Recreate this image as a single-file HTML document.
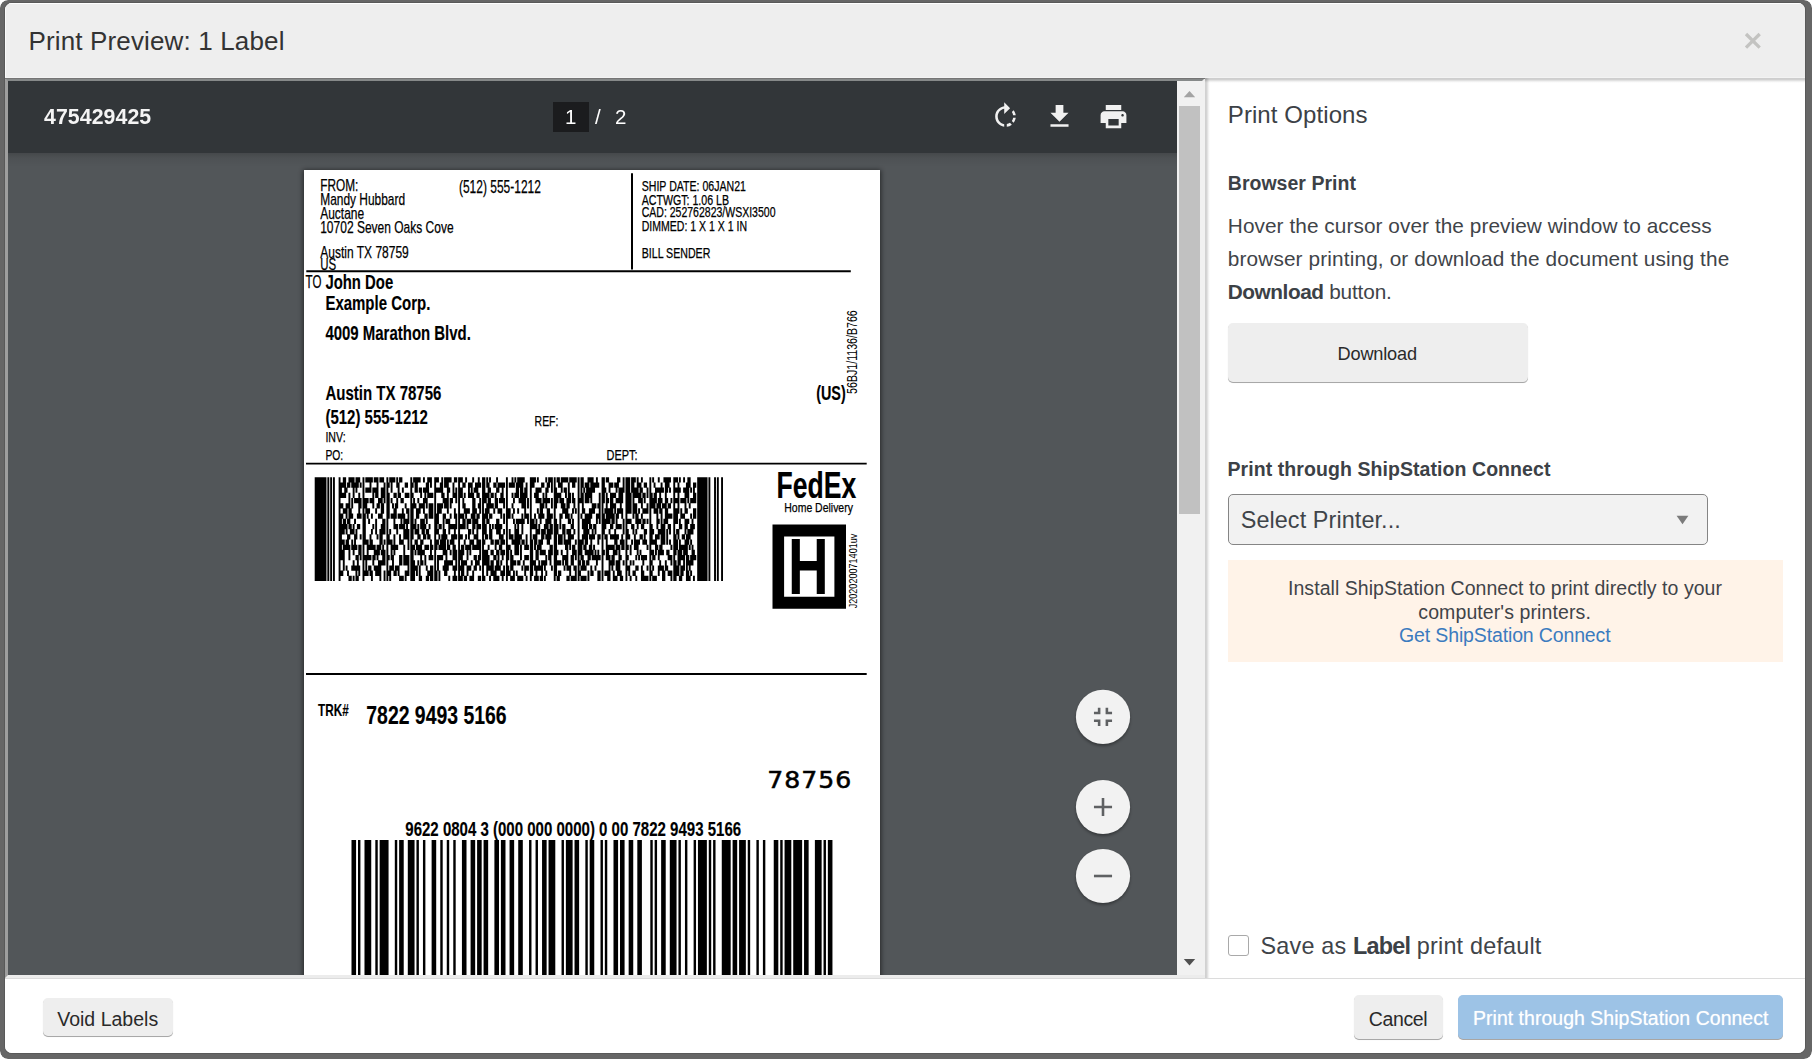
<!DOCTYPE html>
<html lang="en">
<head>
<meta charset="utf-8">
<title>Print Preview: 1 Label</title>
<style>
html,body{margin:0;padding:0;}
body{width:1812px;height:1059px;overflow:hidden;background:#fff;font-family:"Liberation Sans",sans-serif;position:relative;}
.abs{position:absolute;box-sizing:border-box;}
.backdrop{left:0;top:0;width:1812px;height:1059px;background:#666666;border-radius:8px;}
.modal{left:5px;top:3px;width:1800px;height:1050px;background:#fff;border-radius:7px;overflow:hidden;box-shadow:0 0 0 1px rgba(0,0,0,.12);}
.modal-header{left:0;top:0;width:1800px;height:75px;background:#eeeeee;border-top:1px solid #fff;border-left:1px solid #fafafa;border-bottom:1px solid #f3f3f3;}
.viewer{left:0;top:75px;width:1200px;height:900px;background:#525659;border-style:solid;border-width:3px;border-color:#868989 #ececec #ececec #9e9e9e;}
.viewer-topline{left:0;top:75px;width:1200px;height:1px;background:#757575;}
.toolbar{left:3px;top:78px;width:1169px;height:72px;background:#323639;}
.pdfarea{left:3px;top:150px;width:1169px;height:822px;background:#525659;overflow:hidden;}
.pdfarea svg{position:absolute;left:0;top:0;}
.pdfshadow{left:0;top:0;width:1169px;height:14px;background:linear-gradient(rgba(0,0,0,.16),rgba(0,0,0,.06) 35%,rgba(0,0,0,0));}
.pageinput{left:548px;top:99px;width:36px;height:30px;background:#1b1c1e;}
.scroll{left:1172px;top:78px;width:28px;height:894px;background:#f1f1f1;}
.thumb{left:2px;top:25px;width:21px;height:408px;background:#c1c1c1;}
.options{left:1200px;top:75px;width:600px;height:900px;background:#fff;}
.sh-top{left:0;top:0;width:600px;height:5px;background:linear-gradient(rgba(0,0,0,.2) 0,rgba(0,0,0,.18) 30%,rgba(0,0,0,.1) 55%,rgba(0,0,0,.03) 78%,rgba(0,0,0,0) 100%);}
.sh-left{left:0;top:0;width:5px;height:900px;background:linear-gradient(to right,rgba(0,0,0,.19) 0,rgba(0,0,0,.17) 30%,rgba(0,0,0,.1) 55%,rgba(0,0,0,.03) 78%,rgba(0,0,0,0) 100%);}
.btn{background:#eeeeee;border-radius:5px;box-shadow:0 1px 0 #a8a8a8, 0 1px 1px rgba(0,0,0,.12);}
.select{background:#f2f2f2;border:1px solid #858585;border-radius:5px;}
.notice{background:#fff3e8;}
.checkbox{background:#fff;border:1px solid #a9a9a9;border-radius:3px;}
.modal-footer{left:0;top:975px;width:1800px;height:75px;background:#fff;border-top:1px solid #dcdcdc;}
.btn-primary{background:#9dc3e6;border-radius:5px;box-shadow:0 1px 0 #a9a6a3;}
.t{position:absolute;white-space:pre;font-family:"Liberation Sans",sans-serif;}
.t b{font-weight:700;color:#3c4146;}
.texts{left:0;top:0;width:1812px;height:1059px;pointer-events:none;}
.corner{width:12px;height:12px;background:#fff;}
</style>
</head>
<body>
<div class="abs backdrop"></div>

<div class="abs modal" role="dialog" aria-label="Print Preview">
  <div class="abs modal-header">
    <svg class="abs" style="left:1735.3px;top:25.300px" width="24" height="24" viewBox="0 0 24 24"><path d="M5 5 18.700 18.700M18.700 5 5 18.700" stroke="#c3c3c1" stroke-width="3.3" fill="none"/></svg>
  </div>

  <div class="abs viewer"></div>
  <div class="abs viewer-topline"></div>
  <div class="abs toolbar">
  </div>
  <div class="abs pageinput"></div>
  <!-- toolbar icons -->
  <svg class="abs" style="left:985.2px;top:98.1px" width="31" height="31" viewBox="0 0 24 24"><path fill="#f1f1f1" d="M15.55 5.55L11 1v3.07C7.06 4.56 4 7.92 4 12s3.05 7.44 7 7.93v-2.02c-2.84-.48-5-2.94-5-5.91s2.16-5.43 5-5.910V10l4.55-4.45zM19.93 11c-.17-1.39-.72-2.73-1.62-3.89l-1.42 1.42c.54.75.88 1.6 1.020 2.47h2.02zM13 17.9v2.02c1.39-.17 2.74-.71 3.9-1.61l-1.44-1.44c-.75.54-1.59.89-2.46 1.030zm3.89-2.42l1.42 1.41c.9-1.16 1.45-2.5 1.62-3.89h-2.02c-.14.87-.48 1.72-1.020 2.480z"/></svg>
  <svg class="abs" style="left:1039.4px;top:98.1px" width="31" height="31" viewBox="0 0 24 24"><path fill="#f1f1f1" d="M19 9h-4V3H9v6H5l7 7 7-7zM5 18v2h14v-2H5z"/></svg>
  <svg class="abs" style="left:1093.2px;top:98.1px" width="31" height="31" viewBox="0 0 24 24"><path fill="#f1f1f1" d="M19 8H5c-1.660 0-3 1.340-3 3v6h4v4h12v-4h4v-6c0-1.660-1.340-3-3-3zm-3 11H8v-5h8v5zm3-7c-.55 0-1-.45-1-1s.45-1 1-1 1 .45 1 1-.45 1-1 1zm-1-9H6v4h12V3z"/></svg>

  <div class="abs pdfarea">
    <svg width="1169" height="822" viewBox="8 153 1169 822">
      <defs>
        <filter id="blur" x="-10%" y="-10%" width="120%" height="120%"><feGaussianBlur stdDeviation="2.6"/></filter>
        <filter id="fabsh" x="-30%" y="-30%" width="160%" height="160%"><feGaussianBlur stdDeviation="1.6"/></filter>
      </defs>
      <rect x="303" y="170" width="578" height="830" fill="#000" opacity=".55" filter="url(#blur)"/>
      <rect x="304" y="170" width="576" height="830" fill="#fff"/>
      <g fill="#000">
<text x="320.2" y="190.7" font-size="16.6" font-weight="400" font-family="Liberation Sans, sans-serif" textLength="38.1" lengthAdjust="spacingAndGlyphs" stroke="#000" stroke-width=".25">FROM:</text>
<text x="320.2" y="204.7" font-size="16.6" font-weight="400" font-family="Liberation Sans, sans-serif" textLength="84.9" lengthAdjust="spacingAndGlyphs" stroke="#000" stroke-width=".25">Mandy Hubbard</text>
<text x="320.2" y="218.6" font-size="16.6" font-weight="400" font-family="Liberation Sans, sans-serif" textLength="44.0" lengthAdjust="spacingAndGlyphs" stroke="#000" stroke-width=".25">Auctane</text>
<text x="320.2" y="232.7" font-size="16.6" font-weight="400" font-family="Liberation Sans, sans-serif" textLength="133.4" lengthAdjust="spacingAndGlyphs" stroke="#000" stroke-width=".25">10702 Seven Oaks Cove</text>
<text x="320.2" y="257.7" font-size="16.6" font-weight="400" font-family="Liberation Sans, sans-serif" textLength="88.6" lengthAdjust="spacingAndGlyphs" stroke="#000" stroke-width=".25">Austin TX 78759</text>
<text x="320.2" y="269.7" font-size="16.6" font-weight="400" font-family="Liberation Sans, sans-serif" textLength="15.9" lengthAdjust="spacingAndGlyphs" stroke="#000" stroke-width=".25">US</text>
<text x="458.9" y="193.3" font-size="17.98" font-weight="400" font-family="Liberation Sans, sans-serif" textLength="82.0" lengthAdjust="spacingAndGlyphs" stroke="#000" stroke-width=".25">(512) 555-1212</text>
<text x="641.7" y="190.7" font-size="13.74" font-weight="400" font-family="Liberation Sans, sans-serif" textLength="104.3" lengthAdjust="spacingAndGlyphs" stroke="#000" stroke-width=".25">SHIP DATE: 06JAN21</text>
<text x="641.7" y="204.7" font-size="13.74" font-weight="400" font-family="Liberation Sans, sans-serif" textLength="87.4" lengthAdjust="spacingAndGlyphs" stroke="#000" stroke-width=".25">ACTWGT: 1.06 LB</text>
<text x="641.7" y="216.8" font-size="13.74" font-weight="400" font-family="Liberation Sans, sans-serif" textLength="133.8" lengthAdjust="spacingAndGlyphs" stroke="#000" stroke-width=".25">CAD: 252762823/WSXI3500</text>
<text x="641.7" y="230.9" font-size="13.74" font-weight="400" font-family="Liberation Sans, sans-serif" textLength="105.3" lengthAdjust="spacingAndGlyphs" stroke="#000" stroke-width=".25">DIMMED: 1 X 1 X 1 IN</text>
<text x="641.7" y="257.7" font-size="13.74" font-weight="400" font-family="Liberation Sans, sans-serif" textLength="68.7" lengthAdjust="spacingAndGlyphs" stroke="#000" stroke-width=".25">BILL SENDER</text>
<line x1="632" y1="173.3" x2="632" y2="269.5" stroke="#000" stroke-width="2"/>
<line x1="306.3" y1="271.25" x2="850.8" y2="271.25" stroke="#000" stroke-width="2.0"/>
<text x="305.6" y="287.8" font-size="18.32" font-weight="400" font-family="Liberation Sans, sans-serif" textLength="15.8" lengthAdjust="spacingAndGlyphs" stroke="#000" stroke-width=".25">TO</text>
<text x="325.4" y="289.4" font-size="20.15" font-weight="700" font-family="Liberation Sans, sans-serif" textLength="67.8" lengthAdjust="spacingAndGlyphs" stroke="#000" stroke-width=".15">John Doe</text>
<text x="325.4" y="309.6" font-size="20.15" font-weight="700" font-family="Liberation Sans, sans-serif" textLength="104.9" lengthAdjust="spacingAndGlyphs" stroke="#000" stroke-width=".15">Example Corp.</text>
<text x="325.4" y="339.8" font-size="20.15" font-weight="700" font-family="Liberation Sans, sans-serif" textLength="145.5" lengthAdjust="spacingAndGlyphs" stroke="#000" stroke-width=".15">4009 Marathon Blvd.</text>
<text x="325.4" y="399.8" font-size="20.15" font-weight="700" font-family="Liberation Sans, sans-serif" textLength="116.0" lengthAdjust="spacingAndGlyphs" stroke="#000" stroke-width=".15">Austin TX 78756</text>
<text x="325.4" y="423.6" font-size="20.15" font-weight="700" font-family="Liberation Sans, sans-serif" textLength="102.5" lengthAdjust="spacingAndGlyphs" stroke="#000" stroke-width=".15">(512) 555-1212</text>
<text x="816.2" y="399.5" font-size="20.15" font-weight="700" font-family="Liberation Sans, sans-serif" textLength="29.5" lengthAdjust="spacingAndGlyphs" stroke="#000" stroke-width=".15">(US)</text>
<text x="325.4" y="441.5" font-size="14.2" font-weight="400" font-family="Liberation Sans, sans-serif" textLength="20.2" lengthAdjust="spacingAndGlyphs" stroke="#000" stroke-width=".25">INV:</text>
<text x="325.4" y="459.8" font-size="14.2" font-weight="400" font-family="Liberation Sans, sans-serif" textLength="17.8" lengthAdjust="spacingAndGlyphs" stroke="#000" stroke-width=".25">PO:</text>
<text x="534.6" y="425.6" font-size="14.2" font-weight="400" font-family="Liberation Sans, sans-serif" textLength="23.8" lengthAdjust="spacingAndGlyphs" stroke="#000" stroke-width=".25">REF:</text>
<text x="606.5" y="459.8" font-size="14.2" font-weight="400" font-family="Liberation Sans, sans-serif" textLength="31.0" lengthAdjust="spacingAndGlyphs" stroke="#000" stroke-width=".25">DEPT:</text>
<text transform="translate(856.8,393.9) rotate(-90)" x="0" y="0" font-size="15.11" font-weight="400" font-family="Liberation Sans, sans-serif" textLength="83.6" lengthAdjust="spacingAndGlyphs">56BJ1/1136/B766</text>
<line x1="306" y1="463.6" x2="866.7" y2="463.6" stroke="#000" stroke-width="1.8"/>
<line x1="306" y1="674" x2="866.7" y2="674" stroke="#000" stroke-width="1.8"/>
<text x="776.6" y="497.8" font-size="37.5" font-weight="700" font-family="Liberation Sans, sans-serif" textLength="79.7" lengthAdjust="spacingAndGlyphs" stroke="#000" stroke-width=".15">FedEx</text>
<text x="784.3" y="511.9" font-size="13.63" font-weight="400" font-family="Liberation Sans, sans-serif" textLength="68.6" lengthAdjust="spacingAndGlyphs" stroke="#000" stroke-width=".25">Home Delivery</text>
<path fill-rule="evenodd" d="M772.5 524.5H846V608.8H772.500zM784.1 536.5V596.7H834.4V536.500z"/>
<text transform="translate(792.2,593.8) scale(0.712,1)" x="-5.8" y="0" font-size="79" font-weight="700" font-family="Liberation Sans, sans-serif">H</text>
<text transform="translate(856.5,608.3) rotate(-90)" x="0" y="0" font-size="11.34" font-weight="400" font-family="Liberation Sans, sans-serif" textLength="74.6" lengthAdjust="spacingAndGlyphs">J202020071401uv</text>
<text x="318.1" y="715.7" font-size="16.03" font-weight="700" font-family="Liberation Sans, sans-serif" textLength="30.6" lengthAdjust="spacingAndGlyphs" stroke="#000" stroke-width=".15">TRK#</text>
<text x="366.3" y="724.0" font-size="25.53" font-weight="700" font-family="Liberation Sans, sans-serif" textLength="140.3" lengthAdjust="spacingAndGlyphs" stroke="#000" stroke-width=".15">7822 9493 5166</text>
<text transform="translate(767.3,788.0) scale(1.075,1)" x="0" y="0" font-size="23.4" font-family="DejaVu Sans, sans-serif" letter-spacing="0.93" stroke="#000" stroke-width="0.55">78756</text>
<text x="405.3" y="835.5" font-size="19.46" font-weight="700" font-family="Liberation Sans, sans-serif" textLength="335.8" lengthAdjust="spacingAndGlyphs" stroke="#000" stroke-width=".15">9622 0804 3 (000 000 0000) 0 00 7822 9493 5166</text>
<path d="M351.50 840.1h4.58V980h-4.58zM358.00 840.1h2.42V980h-2.42zM364.49 840.1h6.75V980h-6.75zM375.32 840.1h2.42V980h-2.42zM379.65 840.1h8.91V980h-8.91zM394.81 840.1h2.42V980h-2.42zM399.14 840.1h4.58V980h-4.58zM407.80 840.1h6.75V980h-6.75zM416.46 840.1h2.42V980h-2.42zM422.96 840.1h2.42V980h-2.42zM431.62 840.1h4.58V980h-4.58zM440.28 840.1h2.42V980h-2.42zM446.77 840.1h2.42V980h-2.42zM453.27 840.1h2.42V980h-2.42zM461.93 840.1h4.58V980h-4.58zM470.59 840.1h4.58V980h-4.58zM477.09 840.1h4.58V980h-4.58zM483.58 840.1h4.58V980h-4.58zM494.41 840.1h4.58V980h-4.58zM500.91 840.1h4.58V980h-4.58zM509.57 840.1h4.58V980h-4.58zM518.23 840.1h4.58V980h-4.58zM529.06 840.1h2.42V980h-2.42zM535.55 840.1h2.42V980h-2.42zM542.05 840.1h4.58V980h-4.58zM548.54 840.1h6.75V980h-6.75zM561.54 840.1h2.42V980h-2.42zM565.87 840.1h6.75V980h-6.75zM574.53 840.1h4.58V980h-4.58zM585.35 840.1h2.42V980h-2.42zM589.68 840.1h4.58V980h-4.58zM600.51 840.1h2.42V980h-2.42zM604.84 840.1h2.42V980h-2.42zM613.50 840.1h4.58V980h-4.58zM620.00 840.1h4.58V980h-4.58zM628.66 840.1h4.58V980h-4.58zM637.32 840.1h4.58V980h-4.58zM650.31 840.1h2.42V980h-2.42zM654.64 840.1h2.42V980h-2.42zM661.14 840.1h4.58V980h-4.58zM669.80 840.1h6.75V980h-6.75zM678.46 840.1h2.42V980h-2.42zM684.96 840.1h2.42V980h-2.42zM693.62 840.1h2.42V980h-2.42zM697.95 840.1h8.91V980h-8.91zM708.78 840.1h2.42V980h-2.42zM713.11 840.1h2.42V980h-2.42zM721.77 840.1h8.91V980h-8.91zM732.60 840.1h4.58V980h-4.58zM739.09 840.1h6.75V980h-6.75zM747.75 840.1h2.42V980h-2.42zM756.41 840.1h2.42V980h-2.42zM762.91 840.1h2.42V980h-2.42zM773.74 840.1h4.58V980h-4.58zM780.23 840.1h2.42V980h-2.42zM784.56 840.1h6.75V980h-6.75zM793.22 840.1h8.91V980h-8.91zM804.05 840.1h4.58V980h-4.58zM814.88 840.1h6.75V980h-6.75zM823.54 840.1h2.42V980h-2.42zM827.87 840.1h4.58V980h-4.58z" fill="#000"/>
<path d="M314.70 477.20h11.75V581.00h-11.75zM327.36 477.20h1.91V581.00h-1.91zM330.17 477.20h1.91V581.00h-1.91zM332.98 477.20h1.91V581.00h-1.91zM697.19 477.20h10.34V581.00h-10.34zM708.44 477.20h1.91V581.00h-1.91zM714.06 477.20h1.91V581.00h-1.91zM716.88 477.20h1.91V581.00h-1.91zM721.09 477.20h1.91V581.00h-1.91zM338.61 477.20h1.91V482.49h-1.91zM342.82 477.20h3.31V482.49h-3.31zM348.45 477.20h6.12V482.49h-6.12zM355.48 477.20h4.72V482.49h-4.72zM362.51 477.20h1.91V482.49h-1.91zM365.32 477.20h7.53V482.49h-7.53zM373.76 477.20h4.72V482.49h-4.72zM379.39 477.20h4.72V482.49h-4.72zM386.42 477.20h1.91V482.49h-1.91zM389.23 477.20h6.12V482.49h-6.12zM396.26 477.20h1.91V482.49h-1.91zM399.07 477.20h3.31V482.49h-3.31zM410.32 477.20h1.91V482.49h-1.91zM413.13 477.20h7.53V482.49h-7.53zM422.98 477.20h1.91V482.49h-1.91zM427.20 477.20h4.72V482.49h-4.72zM434.23 477.20h4.72V482.49h-4.72zM441.26 477.20h1.91V482.49h-1.91zM444.07 477.20h7.53V482.49h-7.53zM453.91 477.20h3.31V482.49h-3.31zM458.13 477.20h4.72V482.49h-4.72zM465.16 477.20h1.91V482.49h-1.91zM472.20 477.20h1.91V482.49h-1.91zM477.82 477.20h1.91V482.49h-1.91zM482.04 477.20h3.31V482.49h-3.31zM486.26 477.20h1.91V482.49h-1.91zM489.07 477.20h1.91V482.49h-1.91zM496.10 477.20h1.91V482.49h-1.91zM505.94 477.20h1.91V482.49h-1.91zM511.57 477.20h1.91V482.49h-1.91zM514.38 477.20h1.91V482.49h-1.91zM517.19 477.20h7.53V482.49h-7.53zM529.85 477.20h6.12V482.49h-6.12zM536.88 477.20h1.91V482.49h-1.91zM545.32 477.20h1.91V482.49h-1.91zM548.13 477.20h4.72V482.49h-4.72zM553.76 477.20h1.91V482.49h-1.91zM556.57 477.20h3.31V482.49h-3.31zM560.79 477.20h7.53V482.49h-7.53zM569.22 477.20h7.53V482.49h-7.53zM577.66 477.20h1.91V482.49h-1.91zM580.47 477.20h3.31V482.49h-3.31zM587.50 477.20h6.12V482.49h-6.12zM595.94 477.20h1.91V482.49h-1.91zM601.57 477.20h3.31V482.49h-3.31zM605.78 477.20h3.31V482.49h-3.31zM617.03 477.20h3.31V482.49h-3.31zM622.66 477.20h1.91V482.49h-1.91zM625.47 477.20h4.72V482.49h-4.72zM631.10 477.20h4.72V482.49h-4.72zM636.72 477.20h1.91V482.49h-1.91zM640.94 477.20h1.91V482.49h-1.91zM649.38 477.20h1.91V482.49h-1.91zM652.19 477.20h1.91V482.49h-1.91zM657.81 477.20h1.91V482.49h-1.91zM663.44 477.20h7.53V482.49h-7.53zM673.28 477.20h4.72V482.49h-4.72zM678.91 477.20h1.91V482.49h-1.91zM683.13 477.20h1.91V482.49h-1.91zM687.34 477.20h3.31V482.49h-3.31zM338.61 482.39h7.53V487.68h-7.53zM347.04 482.39h3.31V487.68h-3.31zM351.26 482.39h7.53V487.68h-7.53zM359.70 482.39h1.91V487.68h-1.91zM362.51 482.39h1.91V487.68h-1.91zM369.54 482.39h1.91V487.68h-1.91zM376.57 482.39h1.91V487.68h-1.91zM383.60 482.39h1.91V487.68h-1.91zM386.42 482.39h3.31V487.68h-3.31zM390.64 482.39h1.91V487.68h-1.91zM396.26 482.39h3.31V487.68h-3.31zM404.70 482.39h3.31V487.68h-3.31zM410.32 482.39h3.31V487.68h-3.31zM414.54 482.39h3.31V487.68h-3.31zM425.79 482.39h3.31V487.68h-3.31zM430.01 482.39h1.91V487.68h-1.91zM434.23 482.39h1.91V487.68h-1.91zM439.85 482.39h3.31V487.68h-3.31zM444.07 482.39h4.72V487.68h-4.72zM452.51 482.39h1.91V487.68h-1.91zM458.13 482.39h1.91V487.68h-1.91zM462.35 482.39h3.31V487.68h-3.31zM467.98 482.39h4.72V487.68h-4.72zM475.01 482.39h6.12V487.68h-6.12zM482.04 482.39h3.31V487.68h-3.31zM486.26 482.39h3.31V487.68h-3.31zM493.29 482.39h3.31V487.68h-3.31zM497.51 482.39h7.53V487.68h-7.53zM505.94 482.39h1.91V487.68h-1.91zM508.76 482.39h6.12V487.68h-6.12zM515.79 482.39h7.53V487.68h-7.53zM525.63 482.39h1.91V487.68h-1.91zM529.85 482.39h4.72V487.68h-4.72zM541.10 482.39h3.31V487.68h-3.31zM546.72 482.39h3.31V487.68h-3.31zM550.94 482.39h1.91V487.68h-1.91zM553.76 482.39h1.91V487.68h-1.91zM557.97 482.39h4.72V487.68h-4.72zM567.82 482.39h1.91V487.68h-1.91zM572.04 482.39h3.31V487.68h-3.31zM577.66 482.39h1.91V487.68h-1.91zM580.47 482.39h3.31V487.68h-3.31zM584.69 482.39h4.72V487.68h-4.72zM590.32 482.39h8.94V487.68h-8.94zM601.57 482.39h3.31V487.68h-3.31zM608.60 482.39h4.72V487.68h-4.72zM614.22 482.39h4.72V487.68h-4.72zM622.66 482.39h1.91V487.68h-1.91zM625.47 482.39h4.72V487.68h-4.72zM631.10 482.39h3.31V487.68h-3.31zM636.72 482.39h4.72V487.68h-4.72zM643.75 482.39h3.31V487.68h-3.31zM649.38 482.39h1.91V487.68h-1.91zM653.60 482.39h1.91V487.68h-1.91zM660.63 482.39h1.91V487.68h-1.91zM664.85 482.39h4.72V487.68h-4.72zM673.28 482.39h1.91V487.68h-1.91zM677.50 482.39h1.91V487.68h-1.91zM685.94 482.39h4.72V487.68h-4.72zM692.97 482.39h3.31V487.68h-3.31zM338.61 487.58h3.31V492.87h-3.31zM344.23 487.58h3.31V492.87h-3.31zM352.67 487.58h1.91V492.87h-1.91zM355.48 487.58h1.91V492.87h-1.91zM362.51 487.58h1.91V492.87h-1.91zM365.32 487.58h6.12V492.87h-6.12zM372.35 487.58h6.12V492.87h-6.12zM380.79 487.58h4.72V492.87h-4.72zM386.42 487.58h1.91V492.87h-1.91zM390.64 487.58h1.91V492.87h-1.91zM397.67 487.58h1.91V492.87h-1.91zM401.88 487.58h1.91V492.87h-1.91zM410.32 487.58h1.91V492.87h-1.91zM414.54 487.58h3.31V492.87h-3.31zM418.76 487.58h3.31V492.87h-3.31zM422.98 487.58h6.12V492.87h-6.12zM434.23 487.58h8.94V492.87h-8.94zM446.88 487.58h3.31V492.87h-3.31zM452.51 487.58h1.91V492.87h-1.91zM455.32 487.58h1.91V492.87h-1.91zM458.13 487.58h4.72V492.87h-4.72zM467.98 487.58h1.91V492.87h-1.91zM470.79 487.58h1.91V492.87h-1.91zM473.60 487.58h4.72V492.87h-4.72zM482.04 487.58h3.31V492.87h-3.31zM487.66 487.58h3.31V492.87h-3.31zM496.10 487.58h3.31V492.87h-3.31zM501.73 487.58h1.91V492.87h-1.91zM505.94 487.58h1.91V492.87h-1.91zM515.79 487.58h3.31V492.87h-3.31zM520.01 487.58h3.31V492.87h-3.31zM524.22 487.58h3.31V492.87h-3.31zM529.85 487.58h1.91V492.87h-1.91zM535.47 487.58h6.12V492.87h-6.12zM545.32 487.58h3.31V492.87h-3.31zM550.94 487.58h1.91V492.87h-1.91zM553.76 487.58h3.31V492.87h-3.31zM560.79 487.58h1.91V492.87h-1.91zM563.60 487.58h3.31V492.87h-3.31zM567.82 487.58h1.91V492.87h-1.91zM577.66 487.58h1.91V492.87h-1.91zM580.47 487.58h1.91V492.87h-1.91zM583.29 487.58h1.91V492.87h-1.91zM586.10 487.58h8.94V492.87h-8.94zM601.57 487.58h4.72V492.87h-4.72zM608.60 487.58h1.91V492.87h-1.91zM615.63 487.58h1.91V492.87h-1.91zM618.44 487.58h6.12V492.87h-6.12zM625.47 487.58h4.72V492.87h-4.72zM631.10 487.58h7.53V492.87h-7.53zM639.53 487.58h3.31V492.87h-3.31zM646.56 487.58h1.91V492.87h-1.91zM649.38 487.58h1.91V492.87h-1.91zM655.00 487.58h8.94V492.87h-8.94zM664.85 487.58h3.31V492.87h-3.31zM669.06 487.58h1.91V492.87h-1.91zM673.28 487.58h7.53V492.87h-7.53zM683.13 487.58h6.12V492.87h-6.12zM690.16 487.58h1.91V492.87h-1.91zM692.97 487.58h1.91V492.87h-1.91zM338.61 492.77h7.53V498.06h-7.53zM348.45 492.77h1.91V498.06h-1.91zM352.67 492.77h1.91V498.06h-1.91zM358.29 492.77h1.91V498.06h-1.91zM362.51 492.77h1.91V498.06h-1.91zM372.35 492.77h1.91V498.06h-1.91zM375.17 492.77h3.31V498.06h-3.31zM380.79 492.77h4.72V498.06h-4.72zM386.42 492.77h3.31V498.06h-3.31zM393.45 492.77h3.31V498.06h-3.31zM397.67 492.77h3.31V498.06h-3.31zM404.70 492.77h4.72V498.06h-4.72zM410.32 492.77h3.31V498.06h-3.31zM420.17 492.77h1.91V498.06h-1.91zM424.38 492.77h1.91V498.06h-1.91zM427.20 492.77h6.12V498.06h-6.12zM434.23 492.77h1.91V498.06h-1.91zM441.26 492.77h3.31V498.06h-3.31zM446.88 492.77h1.91V498.06h-1.91zM452.51 492.77h4.72V498.06h-4.72zM458.13 492.77h4.72V498.06h-4.72zM463.76 492.77h1.91V498.06h-1.91zM467.98 492.77h6.12V498.06h-6.12zM476.41 492.77h3.31V498.06h-3.31zM482.04 492.77h7.53V498.06h-7.53zM490.48 492.77h3.31V498.06h-3.31zM494.69 492.77h1.91V498.06h-1.91zM500.32 492.77h3.31V498.06h-3.31zM505.94 492.77h1.91V498.06h-1.91zM511.57 492.77h1.91V498.06h-1.91zM514.38 492.77h4.72V498.06h-4.72zM520.01 492.77h7.53V498.06h-7.53zM529.85 492.77h1.91V498.06h-1.91zM534.07 492.77h4.72V498.06h-4.72zM542.51 492.77h1.91V498.06h-1.91zM545.32 492.77h1.91V498.06h-1.91zM553.76 492.77h7.53V498.06h-7.53zM565.00 492.77h1.91V498.06h-1.91zM567.82 492.77h3.31V498.06h-3.31zM572.04 492.77h1.91V498.06h-1.91zM577.66 492.77h1.91V498.06h-1.91zM580.47 492.77h3.31V498.06h-3.31zM584.69 492.77h7.53V498.06h-7.53zM598.75 492.77h1.91V498.06h-1.91zM601.57 492.77h3.31V498.06h-3.31zM605.78 492.77h1.91V498.06h-1.91zM610.00 492.77h6.12V498.06h-6.12zM618.44 492.77h4.72V498.06h-4.72zM625.47 492.77h6.12V498.06h-6.12zM632.50 492.77h8.94V498.06h-8.94zM642.35 492.77h3.31V498.06h-3.31zM646.56 492.77h1.91V498.06h-1.91zM649.38 492.77h3.31V498.06h-3.31zM653.60 492.77h3.31V498.06h-3.31zM659.22 492.77h1.91V498.06h-1.91zM664.85 492.77h1.91V498.06h-1.91zM673.28 492.77h1.91V498.06h-1.91zM677.50 492.77h1.91V498.06h-1.91zM684.53 492.77h4.72V498.06h-4.72zM692.97 492.77h3.31V498.06h-3.31zM338.61 497.96h1.91V503.25h-1.91zM348.45 497.96h1.91V503.25h-1.91zM351.26 497.96h1.91V503.25h-1.91zM354.07 497.96h7.53V503.25h-7.53zM362.51 497.96h6.12V503.25h-6.12zM369.54 497.96h4.72V503.25h-4.72zM377.98 497.96h4.72V503.25h-4.72zM383.60 497.96h1.91V503.25h-1.91zM386.42 497.96h3.31V503.25h-3.31zM390.64 497.96h1.91V503.25h-1.91zM396.26 497.96h1.91V503.25h-1.91zM400.48 497.96h3.31V503.25h-3.31zM410.32 497.96h1.91V503.25h-1.91zM413.13 497.96h1.91V503.25h-1.91zM417.35 497.96h1.91V503.25h-1.91zM422.98 497.96h4.72V503.25h-4.72zM434.23 497.96h1.91V503.25h-1.91zM442.66 497.96h6.12V503.25h-6.12zM449.70 497.96h3.31V503.25h-3.31zM455.32 497.96h1.91V503.25h-1.91zM458.13 497.96h1.91V503.25h-1.91zM462.35 497.96h1.91V503.25h-1.91zM472.20 497.96h3.31V503.25h-3.31zM479.23 497.96h1.91V503.25h-1.91zM482.04 497.96h4.72V503.25h-4.72zM487.66 497.96h3.31V503.25h-3.31zM494.69 497.96h3.31V503.25h-3.31zM498.91 497.96h6.12V503.25h-6.12zM505.94 497.96h1.91V503.25h-1.91zM512.98 497.96h1.91V503.25h-1.91zM518.60 497.96h7.53V503.25h-7.53zM527.04 497.96h1.91V503.25h-1.91zM529.85 497.96h1.91V503.25h-1.91zM535.47 497.96h6.12V503.25h-6.12zM542.51 497.96h7.53V503.25h-7.53zM550.94 497.96h1.91V503.25h-1.91zM553.76 497.96h4.72V503.25h-4.72zM559.38 497.96h4.72V503.25h-4.72zM566.41 497.96h4.72V503.25h-4.72zM572.04 497.96h3.31V503.25h-3.31zM577.66 497.96h6.12V503.25h-6.12zM584.69 497.96h4.72V503.25h-4.72zM590.32 497.96h1.91V503.25h-1.91zM598.75 497.96h1.91V503.25h-1.91zM601.57 497.96h3.31V503.25h-3.31zM605.78 497.96h3.31V503.25h-3.31zM610.00 497.96h3.31V503.25h-3.31zM615.63 497.96h7.53V503.25h-7.53zM625.47 497.96h6.12V503.25h-6.12zM632.50 497.96h1.91V503.25h-1.91zM638.13 497.96h4.72V503.25h-4.72zM643.75 497.96h1.91V503.25h-1.91zM649.38 497.96h7.53V503.25h-7.53zM657.81 497.96h4.72V503.25h-4.72zM664.85 497.96h3.31V503.25h-3.31zM670.47 497.96h1.91V503.25h-1.91zM673.28 497.96h6.12V503.25h-6.12zM680.31 497.96h6.12V503.25h-6.12zM687.34 497.96h1.91V503.25h-1.91zM690.16 497.96h6.12V503.25h-6.12zM338.61 503.15h4.72V508.44h-4.72zM345.64 503.15h4.72V508.44h-4.72zM351.26 503.15h1.91V508.44h-1.91zM358.29 503.15h3.31V508.44h-3.31zM362.51 503.15h4.72V508.44h-4.72zM372.35 503.15h1.91V508.44h-1.91zM376.57 503.15h3.31V508.44h-3.31zM380.79 503.15h3.31V508.44h-3.31zM386.42 503.15h3.31V508.44h-3.31zM392.04 503.15h1.91V508.44h-1.91zM394.85 503.15h3.31V508.44h-3.31zM404.70 503.15h1.91V508.44h-1.91zM410.32 503.15h6.12V508.44h-6.12zM418.76 503.15h6.12V508.44h-6.12zM425.79 503.15h1.91V508.44h-1.91zM428.60 503.15h4.72V508.44h-4.72zM434.23 503.15h1.91V508.44h-1.91zM437.04 503.15h6.12V508.44h-6.12zM444.07 503.15h4.72V508.44h-4.72zM449.70 503.15h1.91V508.44h-1.91zM458.13 503.15h1.91V508.44h-1.91zM462.35 503.15h3.31V508.44h-3.31zM472.20 503.15h3.31V508.44h-3.31zM477.82 503.15h3.31V508.44h-3.31zM482.04 503.15h1.91V508.44h-1.91zM486.26 503.15h7.53V508.44h-7.53zM494.69 503.15h3.31V508.44h-3.31zM503.13 503.15h1.91V508.44h-1.91zM505.94 503.15h1.91V508.44h-1.91zM511.57 503.15h1.91V508.44h-1.91zM521.41 503.15h4.72V508.44h-4.72zM527.04 503.15h1.91V508.44h-1.91zM529.85 503.15h1.91V508.44h-1.91zM539.69 503.15h4.72V508.44h-4.72zM545.32 503.15h1.91V508.44h-1.91zM550.94 503.15h1.91V508.44h-1.91zM553.76 503.15h3.31V508.44h-3.31zM560.79 503.15h4.72V508.44h-4.72zM566.41 503.15h3.31V508.44h-3.31zM573.44 503.15h1.91V508.44h-1.91zM577.66 503.15h1.91V508.44h-1.91zM581.88 503.15h1.91V508.44h-1.91zM591.72 503.15h4.72V508.44h-4.72zM597.35 503.15h3.31V508.44h-3.31zM601.57 503.15h1.91V508.44h-1.91zM605.78 503.15h1.91V508.44h-1.91zM610.00 503.15h6.12V508.44h-6.12zM619.85 503.15h1.91V508.44h-1.91zM625.47 503.15h6.12V508.44h-6.12zM632.50 503.15h4.72V508.44h-4.72zM640.94 503.15h1.91V508.44h-1.91zM646.56 503.15h1.91V508.44h-1.91zM649.38 503.15h6.12V508.44h-6.12zM656.41 503.15h4.72V508.44h-4.72zM662.03 503.15h4.72V508.44h-4.72zM667.66 503.15h3.31V508.44h-3.31zM673.28 503.15h1.91V508.44h-1.91zM677.50 503.15h1.91V508.44h-1.91zM684.53 503.15h1.91V508.44h-1.91zM688.75 503.15h1.91V508.44h-1.91zM338.61 508.34h1.91V513.63h-1.91zM342.82 508.34h4.72V513.63h-4.72zM348.45 508.34h3.31V513.63h-3.31zM358.29 508.34h1.91V513.63h-1.91zM362.51 508.34h1.91V513.63h-1.91zM365.32 508.34h4.72V513.63h-4.72zM375.17 508.34h1.91V513.63h-1.91zM380.79 508.34h3.31V513.63h-3.31zM386.42 508.34h3.31V513.63h-3.31zM393.45 508.34h3.31V513.63h-3.31zM401.88 508.34h1.91V513.63h-1.91zM406.10 508.34h3.31V513.63h-3.31zM410.32 508.34h3.31V513.63h-3.31zM415.95 508.34h4.72V513.63h-4.72zM422.98 508.34h1.91V513.63h-1.91zM428.60 508.34h4.72V513.63h-4.72zM434.23 508.34h1.91V513.63h-1.91zM437.04 508.34h4.72V513.63h-4.72zM446.88 508.34h1.91V513.63h-1.91zM453.91 508.34h1.91V513.63h-1.91zM458.13 508.34h1.91V513.63h-1.91zM463.76 508.34h6.12V513.63h-6.12zM472.20 508.34h4.72V513.63h-4.72zM479.23 508.34h1.91V513.63h-1.91zM482.04 508.34h1.91V513.63h-1.91zM484.85 508.34h4.72V513.63h-4.72zM493.29 508.34h1.91V513.63h-1.91zM497.51 508.34h4.72V513.63h-4.72zM505.94 508.34h4.72V513.63h-4.72zM512.98 508.34h1.91V513.63h-1.91zM517.19 508.34h1.91V513.63h-1.91zM524.22 508.34h1.91V513.63h-1.91zM529.85 508.34h1.91V513.63h-1.91zM536.88 508.34h1.91V513.63h-1.91zM539.69 508.34h3.31V513.63h-3.31zM546.72 508.34h3.31V513.63h-3.31zM553.76 508.34h1.91V513.63h-1.91zM562.19 508.34h6.12V513.63h-6.12zM572.04 508.34h1.91V513.63h-1.91zM574.85 508.34h1.91V513.63h-1.91zM577.66 508.34h1.91V513.63h-1.91zM581.88 508.34h3.31V513.63h-3.31zM588.91 508.34h6.12V513.63h-6.12zM598.75 508.34h1.91V513.63h-1.91zM601.57 508.34h1.91V513.63h-1.91zM604.38 508.34h8.94V513.63h-8.94zM614.22 508.34h1.91V513.63h-1.91zM617.03 508.34h6.12V513.63h-6.12zM625.47 508.34h6.12V513.63h-6.12zM632.50 508.34h4.72V513.63h-4.72zM638.13 508.34h1.91V513.63h-1.91zM642.35 508.34h6.12V513.63h-6.12zM649.38 508.34h1.91V513.63h-1.91zM653.60 508.34h4.72V513.63h-4.72zM659.22 508.34h3.31V513.63h-3.31zM664.85 508.34h3.31V513.63h-3.31zM673.28 508.34h6.12V513.63h-6.12zM680.31 508.34h1.91V513.63h-1.91zM684.53 508.34h3.31V513.63h-3.31zM692.97 508.34h3.31V513.63h-3.31zM338.61 513.53h4.72V518.82h-4.72zM345.64 513.53h1.91V518.82h-1.91zM348.45 513.53h4.72V518.82h-4.72zM356.89 513.53h4.72V518.82h-4.72zM362.51 513.53h3.31V518.82h-3.31zM366.73 513.53h1.91V518.82h-1.91zM370.95 513.53h1.91V518.82h-1.91zM377.98 513.53h4.72V518.82h-4.72zM386.42 513.53h3.31V518.82h-3.31zM390.64 513.53h6.12V518.82h-6.12zM397.67 513.53h7.53V518.82h-7.53zM407.51 513.53h1.91V518.82h-1.91zM410.32 513.53h3.31V518.82h-3.31zM415.95 513.53h3.31V518.82h-3.31zM424.38 513.53h3.31V518.82h-3.31zM428.60 513.53h4.72V518.82h-4.72zM434.23 513.53h4.72V518.82h-4.72zM442.66 513.53h3.31V518.82h-3.31zM449.70 513.53h1.91V518.82h-1.91zM453.91 513.53h3.31V518.82h-3.31zM458.13 513.53h6.12V518.82h-6.12zM465.16 513.53h1.91V518.82h-1.91zM470.79 513.53h4.72V518.82h-4.72zM476.41 513.53h3.31V518.82h-3.31zM482.04 513.53h6.12V518.82h-6.12zM489.07 513.53h3.31V518.82h-3.31zM500.32 513.53h1.91V518.82h-1.91zM503.13 513.53h1.91V518.82h-1.91zM505.94 513.53h4.72V518.82h-4.72zM511.57 513.53h1.91V518.82h-1.91zM521.41 513.53h1.91V518.82h-1.91zM524.22 513.53h4.72V518.82h-4.72zM529.85 513.53h1.91V518.82h-1.91zM534.07 513.53h1.91V518.82h-1.91zM538.29 513.53h6.12V518.82h-6.12zM546.72 513.53h6.12V518.82h-6.12zM553.76 513.53h1.91V518.82h-1.91zM559.38 513.53h3.31V518.82h-3.31zM565.00 513.53h4.72V518.82h-4.72zM570.63 513.53h1.91V518.82h-1.91zM577.66 513.53h1.91V518.82h-1.91zM580.47 513.53h1.91V518.82h-1.91zM584.69 513.53h7.53V518.82h-7.53zM595.94 513.53h4.72V518.82h-4.72zM601.57 513.53h3.31V518.82h-3.31zM605.78 513.53h8.94V518.82h-8.94zM615.63 513.53h3.31V518.82h-3.31zM621.25 513.53h1.91V518.82h-1.91zM625.47 513.53h1.91V518.82h-1.91zM632.50 513.53h1.91V518.82h-1.91zM635.32 513.53h3.31V518.82h-3.31zM640.94 513.53h1.91V518.82h-1.91zM649.38 513.53h1.91V518.82h-1.91zM656.41 513.53h1.91V518.82h-1.91zM660.63 513.53h1.91V518.82h-1.91zM664.85 513.53h7.53V518.82h-7.53zM673.28 513.53h4.72V518.82h-4.72zM680.31 513.53h4.72V518.82h-4.72zM690.16 513.53h1.91V518.82h-1.91zM692.97 513.53h3.31V518.82h-3.31zM338.61 518.72h3.31V524.01h-3.31zM342.82 518.72h3.31V524.01h-3.31zM347.04 518.72h3.31V524.01h-3.31zM354.07 518.72h1.91V524.01h-1.91zM362.51 518.72h3.31V524.01h-3.31zM368.14 518.72h1.91V524.01h-1.91zM375.17 518.72h1.91V524.01h-1.91zM382.20 518.72h3.31V524.01h-3.31zM386.42 518.72h1.91V524.01h-1.91zM393.45 518.72h1.91V524.01h-1.91zM400.48 518.72h1.91V524.01h-1.91zM403.29 518.72h6.12V524.01h-6.12zM410.32 518.72h3.31V524.01h-3.31zM414.54 518.72h1.91V524.01h-1.91zM420.17 518.72h4.72V524.01h-4.72zM425.79 518.72h1.91V524.01h-1.91zM434.23 518.72h4.72V524.01h-4.72zM442.66 518.72h1.91V524.01h-1.91zM445.48 518.72h4.72V524.01h-4.72zM455.32 518.72h1.91V524.01h-1.91zM458.13 518.72h1.91V524.01h-1.91zM462.35 518.72h3.31V524.01h-3.31zM466.57 518.72h4.72V524.01h-4.72zM472.20 518.72h6.12V524.01h-6.12zM482.04 518.72h3.31V524.01h-3.31zM486.26 518.72h3.31V524.01h-3.31zM496.10 518.72h3.31V524.01h-3.31zM503.13 518.72h1.91V524.01h-1.91zM505.94 518.72h1.91V524.01h-1.91zM512.98 518.72h1.91V524.01h-1.91zM515.79 518.72h8.94V524.01h-8.94zM527.04 518.72h1.91V524.01h-1.91zM529.85 518.72h4.72V524.01h-4.72zM535.47 518.72h1.91V524.01h-1.91zM539.69 518.72h1.91V524.01h-1.91zM545.32 518.72h6.12V524.01h-6.12zM553.76 518.72h3.31V524.01h-3.31zM559.38 518.72h1.91V524.01h-1.91zM567.82 518.72h3.31V524.01h-3.31zM572.04 518.72h1.91V524.01h-1.91zM577.66 518.72h1.91V524.01h-1.91zM581.88 518.72h8.94V524.01h-8.94zM595.94 518.72h1.91V524.01h-1.91zM598.75 518.72h1.91V524.01h-1.91zM601.57 518.72h8.94V524.01h-8.94zM611.41 518.72h3.31V524.01h-3.31zM615.63 518.72h1.91V524.01h-1.91zM622.66 518.72h1.91V524.01h-1.91zM625.47 518.72h6.12V524.01h-6.12zM635.32 518.72h6.12V524.01h-6.12zM642.35 518.72h3.31V524.01h-3.31zM646.56 518.72h1.91V524.01h-1.91zM649.38 518.72h1.91V524.01h-1.91zM656.41 518.72h3.31V524.01h-3.31zM660.63 518.72h1.91V524.01h-1.91zM663.44 518.72h4.72V524.01h-4.72zM673.28 518.72h4.72V524.01h-4.72zM678.91 518.72h1.91V524.01h-1.91zM684.53 518.72h4.72V524.01h-4.72zM691.56 518.72h1.91V524.01h-1.91zM338.61 523.91h8.94V529.20h-8.94zM348.45 523.91h3.31V529.20h-3.31zM352.67 523.91h1.91V529.20h-1.91zM356.89 523.91h3.31V529.20h-3.31zM362.51 523.91h3.31V529.20h-3.31zM372.35 523.91h1.91V529.20h-1.91zM375.17 523.91h1.91V529.20h-1.91zM380.79 523.91h4.72V529.20h-4.72zM386.42 523.91h1.91V529.20h-1.91zM393.45 523.91h4.72V529.20h-4.72zM399.07 523.91h6.12V529.20h-6.12zM406.10 523.91h1.91V529.20h-1.91zM410.32 523.91h6.12V529.20h-6.12zM417.35 523.91h1.91V529.20h-1.91zM420.17 523.91h6.12V529.20h-6.12zM428.60 523.91h1.91V529.20h-1.91zM434.23 523.91h3.31V529.20h-3.31zM438.45 523.91h3.31V529.20h-3.31zM442.66 523.91h1.91V529.20h-1.91zM448.29 523.91h8.94V529.20h-8.94zM458.13 523.91h7.53V529.20h-7.53zM466.57 523.91h1.91V529.20h-1.91zM472.20 523.91h3.31V529.20h-3.31zM476.41 523.91h4.72V529.20h-4.72zM482.04 523.91h4.72V529.20h-4.72zM489.07 523.91h1.91V529.20h-1.91zM491.88 523.91h1.91V529.20h-1.91zM494.69 523.91h7.53V529.20h-7.53zM505.94 523.91h1.91V529.20h-1.91zM514.38 523.91h1.91V529.20h-1.91zM517.19 523.91h1.91V529.20h-1.91zM521.41 523.91h1.91V529.20h-1.91zM529.85 523.91h7.53V529.20h-7.53zM538.29 523.91h1.91V529.20h-1.91zM543.91 523.91h4.72V529.20h-4.72zM549.54 523.91h3.31V529.20h-3.31zM553.76 523.91h4.72V529.20h-4.72zM559.38 523.91h1.91V529.20h-1.91zM562.19 523.91h3.31V529.20h-3.31zM570.63 523.91h3.31V529.20h-3.31zM577.66 523.91h1.91V529.20h-1.91zM581.88 523.91h6.12V529.20h-6.12zM588.91 523.91h3.31V529.20h-3.31zM593.13 523.91h3.31V529.20h-3.31zM601.57 523.91h4.72V529.20h-4.72zM610.00 523.91h3.31V529.20h-3.31zM615.63 523.91h6.12V529.20h-6.12zM622.66 523.91h1.91V529.20h-1.91zM625.47 523.91h1.91V529.20h-1.91zM631.10 523.91h3.31V529.20h-3.31zM636.72 523.91h1.91V529.20h-1.91zM640.94 523.91h3.31V529.20h-3.31zM649.38 523.91h3.31V529.20h-3.31zM656.41 523.91h1.91V529.20h-1.91zM660.63 523.91h4.72V529.20h-4.72zM667.66 523.91h3.31V529.20h-3.31zM673.28 523.91h1.91V529.20h-1.91zM678.91 523.91h3.31V529.20h-3.31zM684.53 523.91h3.31V529.20h-3.31zM690.16 523.91h4.72V529.20h-4.72zM338.61 529.10h6.12V534.39h-6.12zM345.64 529.10h1.91V534.39h-1.91zM349.86 529.10h4.72V534.39h-4.72zM355.48 529.10h1.91V534.39h-1.91zM362.51 529.10h3.31V534.39h-3.31zM370.95 529.10h1.91V534.39h-1.91zM375.17 529.10h1.91V534.39h-1.91zM379.39 529.10h6.12V534.39h-6.12zM386.42 529.10h1.91V534.39h-1.91zM389.23 529.10h1.91V534.39h-1.91zM396.26 529.10h1.91V534.39h-1.91zM403.29 529.10h6.12V534.39h-6.12zM410.32 529.10h3.31V534.39h-3.31zM414.54 529.10h4.72V534.39h-4.72zM421.57 529.10h3.31V534.39h-3.31zM425.79 529.10h3.31V534.39h-3.31zM434.23 529.10h4.72V534.39h-4.72zM442.66 529.10h3.31V534.39h-3.31zM448.29 529.10h1.91V534.39h-1.91zM453.91 529.10h1.91V534.39h-1.91zM458.13 529.10h1.91V534.39h-1.91zM467.98 529.10h3.31V534.39h-3.31zM472.20 529.10h1.91V534.39h-1.91zM476.41 529.10h1.91V534.39h-1.91zM482.04 529.10h4.72V534.39h-4.72zM489.07 529.10h3.31V534.39h-3.31zM496.10 529.10h4.72V534.39h-4.72zM503.13 529.10h1.91V534.39h-1.91zM505.94 529.10h1.91V534.39h-1.91zM508.76 529.10h1.91V534.39h-1.91zM514.38 529.10h4.72V534.39h-4.72zM521.41 529.10h1.91V534.39h-1.91zM529.85 529.10h1.91V534.39h-1.91zM535.47 529.10h4.72V534.39h-4.72zM541.10 529.10h4.72V534.39h-4.72zM546.72 529.10h6.12V534.39h-6.12zM553.76 529.10h4.72V534.39h-4.72zM562.19 529.10h3.31V534.39h-3.31zM566.41 529.10h4.72V534.39h-4.72zM573.44 529.10h1.91V534.39h-1.91zM577.66 529.10h1.91V534.39h-1.91zM583.29 529.10h6.12V534.39h-6.12zM591.72 529.10h1.91V534.39h-1.91zM594.54 529.10h1.91V534.39h-1.91zM601.57 529.10h3.31V534.39h-3.31zM608.60 529.10h1.91V534.39h-1.91zM614.22 529.10h1.91V534.39h-1.91zM622.66 529.10h1.91V534.39h-1.91zM625.47 529.10h3.31V534.39h-3.31zM632.50 529.10h1.91V534.39h-1.91zM635.32 529.10h1.91V534.39h-1.91zM643.75 529.10h3.31V534.39h-3.31zM649.38 529.10h4.72V534.39h-4.72zM657.81 529.10h7.53V534.39h-7.53zM666.25 529.10h1.91V534.39h-1.91zM669.06 529.10h1.91V534.39h-1.91zM673.28 529.10h1.91V534.39h-1.91zM676.10 529.10h3.31V534.39h-3.31zM684.53 529.10h1.91V534.39h-1.91zM687.34 529.10h6.12V534.39h-6.12zM338.61 534.29h3.31V539.58h-3.31zM347.04 534.29h3.31V539.58h-3.31zM354.07 534.29h3.31V539.58h-3.31zM359.70 534.29h1.91V539.58h-1.91zM362.51 534.29h3.31V539.58h-3.31zM369.54 534.29h1.91V539.58h-1.91zM376.57 534.29h1.91V539.58h-1.91zM379.39 534.29h3.31V539.58h-3.31zM386.42 534.29h3.31V539.58h-3.31zM393.45 534.29h1.91V539.58h-1.91zM399.07 534.29h1.91V539.58h-1.91zM403.29 534.29h6.12V539.58h-6.12zM410.32 534.29h3.31V539.58h-3.31zM417.35 534.29h3.31V539.58h-3.31zM422.98 534.29h3.31V539.58h-3.31zM427.20 534.29h3.31V539.58h-3.31zM434.23 534.29h1.91V539.58h-1.91zM438.45 534.29h1.91V539.58h-1.91zM441.26 534.29h6.12V539.58h-6.12zM451.10 534.29h6.12V539.58h-6.12zM458.13 534.29h4.72V539.58h-4.72zM465.16 534.29h1.91V539.58h-1.91zM467.98 534.29h1.91V539.58h-1.91zM473.60 534.29h4.72V539.58h-4.72zM482.04 534.29h1.91V539.58h-1.91zM484.85 534.29h3.31V539.58h-3.31zM489.07 534.29h3.31V539.58h-3.31zM498.91 534.29h4.72V539.58h-4.72zM505.94 534.29h1.91V539.58h-1.91zM508.76 534.29h4.72V539.58h-4.72zM514.38 534.29h7.53V539.58h-7.53zM525.63 534.29h1.91V539.58h-1.91zM529.85 534.29h1.91V539.58h-1.91zM532.66 534.29h4.72V539.58h-4.72zM541.10 534.29h3.31V539.58h-3.31zM545.32 534.29h6.12V539.58h-6.12zM553.76 534.29h3.31V539.58h-3.31zM557.97 534.29h4.72V539.58h-4.72zM563.60 534.29h1.91V539.58h-1.91zM567.82 534.29h6.12V539.58h-6.12zM577.66 534.29h1.91V539.58h-1.91zM581.88 534.29h6.12V539.58h-6.12zM588.91 534.29h6.12V539.58h-6.12zM597.35 534.29h3.31V539.58h-3.31zM601.57 534.29h1.91V539.58h-1.91zM604.38 534.29h3.31V539.58h-3.31zM610.00 534.29h8.94V539.58h-8.94zM621.25 534.29h1.91V539.58h-1.91zM625.47 534.29h4.72V539.58h-4.72zM633.91 534.29h1.91V539.58h-1.91zM639.53 534.29h3.31V539.58h-3.31zM643.75 534.29h1.91V539.58h-1.91zM649.38 534.29h3.31V539.58h-3.31zM655.00 534.29h4.72V539.58h-4.72zM660.63 534.29h4.72V539.58h-4.72zM666.25 534.29h1.91V539.58h-1.91zM673.28 534.29h3.31V539.58h-3.31zM677.50 534.29h1.91V539.58h-1.91zM681.72 534.29h3.31V539.58h-3.31zM685.94 534.29h4.72V539.58h-4.72zM338.61 539.48h6.12V544.77h-6.12zM345.64 539.48h3.31V544.77h-3.31zM351.26 539.48h1.91V544.77h-1.91zM354.07 539.48h1.91V544.77h-1.91zM362.51 539.48h6.12V544.77h-6.12zM369.54 539.48h3.31V544.77h-3.31zM379.39 539.48h3.31V544.77h-3.31zM383.60 539.48h1.91V544.77h-1.91zM386.42 539.48h6.12V544.77h-6.12zM393.45 539.48h1.91V544.77h-1.91zM399.07 539.48h4.72V544.77h-4.72zM407.51 539.48h1.91V544.77h-1.91zM410.32 539.48h1.91V544.77h-1.91zM414.54 539.48h3.31V544.77h-3.31zM420.17 539.48h3.31V544.77h-3.31zM430.01 539.48h1.91V544.77h-1.91zM434.23 539.48h4.72V544.77h-4.72zM439.85 539.48h6.12V544.77h-6.12zM446.88 539.48h1.91V544.77h-1.91zM449.70 539.48h4.72V544.77h-4.72zM458.13 539.48h1.91V544.77h-1.91zM463.76 539.48h1.91V544.77h-1.91zM469.38 539.48h4.72V544.77h-4.72zM476.41 539.48h4.72V544.77h-4.72zM482.04 539.48h3.31V544.77h-3.31zM490.48 539.48h3.31V544.77h-3.31zM494.69 539.48h4.72V544.77h-4.72zM500.32 539.48h4.72V544.77h-4.72zM505.94 539.48h1.91V544.77h-1.91zM511.57 539.48h8.94V544.77h-8.94zM521.41 539.48h3.31V544.77h-3.31zM525.63 539.48h1.91V544.77h-1.91zM529.85 539.48h3.31V544.77h-3.31zM534.07 539.48h3.31V544.77h-3.31zM538.29 539.48h4.72V544.77h-4.72zM546.72 539.48h3.31V544.77h-3.31zM553.76 539.48h3.31V544.77h-3.31zM557.97 539.48h4.72V544.77h-4.72zM563.60 539.48h7.53V544.77h-7.53zM574.85 539.48h1.91V544.77h-1.91zM577.66 539.48h6.12V544.77h-6.12zM584.69 539.48h3.31V544.77h-3.31zM590.32 539.48h1.91V544.77h-1.91zM597.35 539.48h1.91V544.77h-1.91zM601.57 539.48h1.91V544.77h-1.91zM605.78 539.48h1.91V544.77h-1.91zM614.22 539.48h3.31V544.77h-3.31zM619.85 539.48h4.72V544.77h-4.72zM625.47 539.48h1.91V544.77h-1.91zM631.10 539.48h1.91V544.77h-1.91zM633.91 539.48h6.12V544.77h-6.12zM642.35 539.48h4.72V544.77h-4.72zM649.38 539.48h7.53V544.77h-7.53zM660.63 539.48h4.72V544.77h-4.72zM666.25 539.48h1.91V544.77h-1.91zM669.06 539.48h1.91V544.77h-1.91zM673.28 539.48h4.72V544.77h-4.72zM678.91 539.48h1.91V544.77h-1.91zM684.53 539.48h4.72V544.77h-4.72zM690.16 539.48h1.91V544.77h-1.91zM338.61 544.67h3.31V549.96h-3.31zM342.82 544.67h7.53V549.96h-7.53zM351.26 544.67h6.12V549.96h-6.12zM358.29 544.67h3.31V549.96h-3.31zM362.51 544.67h1.91V549.96h-1.91zM366.73 544.67h8.94V549.96h-8.94zM376.57 544.67h4.72V549.96h-4.72zM382.20 544.67h1.91V549.96h-1.91zM386.42 544.67h1.91V549.96h-1.91zM390.64 544.67h7.53V549.96h-7.53zM403.29 544.67h1.91V549.96h-1.91zM407.51 544.67h1.91V549.96h-1.91zM410.32 544.67h4.72V549.96h-4.72zM415.95 544.67h6.12V549.96h-6.12zM424.38 544.67h4.72V549.96h-4.72zM430.01 544.67h3.31V549.96h-3.31zM434.23 544.67h3.31V549.96h-3.31zM438.45 544.67h7.53V549.96h-7.53zM446.88 544.67h3.31V549.96h-3.31zM452.51 544.67h3.31V549.96h-3.31zM458.13 544.67h1.91V549.96h-1.91zM460.95 544.67h3.31V549.96h-3.31zM465.16 544.67h6.12V549.96h-6.12zM472.20 544.67h8.94V549.96h-8.94zM482.04 544.67h1.91V549.96h-1.91zM487.66 544.67h1.91V549.96h-1.91zM494.69 544.67h1.91V549.96h-1.91zM498.91 544.67h3.31V549.96h-3.31zM505.94 544.67h4.72V549.96h-4.72zM514.38 544.67h4.72V549.96h-4.72zM520.01 544.67h1.91V549.96h-1.91zM524.22 544.67h4.72V549.96h-4.72zM529.85 544.67h3.31V549.96h-3.31zM534.07 544.67h1.91V549.96h-1.91zM536.88 544.67h4.72V549.96h-4.72zM549.54 544.67h3.31V549.96h-3.31zM553.76 544.67h3.31V549.96h-3.31zM565.00 544.67h3.31V549.96h-3.31zM569.22 544.67h1.91V549.96h-1.91zM572.04 544.67h3.31V549.96h-3.31zM577.66 544.67h4.72V549.96h-4.72zM583.29 544.67h3.31V549.96h-3.31zM588.91 544.67h3.31V549.96h-3.31zM593.13 544.67h1.91V549.96h-1.91zM601.57 544.67h1.91V549.96h-1.91zM605.78 544.67h8.94V549.96h-8.94zM615.63 544.67h4.72V549.96h-4.72zM621.25 544.67h3.31V549.96h-3.31zM625.47 544.67h3.31V549.96h-3.31zM629.69 544.67h1.91V549.96h-1.91zM633.91 544.67h4.72V549.96h-4.72zM646.56 544.67h1.91V549.96h-1.91zM649.38 544.67h1.91V549.96h-1.91zM655.00 544.67h3.31V549.96h-3.31zM659.22 544.67h3.31V549.96h-3.31zM670.47 544.67h1.91V549.96h-1.91zM673.28 544.67h4.72V549.96h-4.72zM678.91 544.67h8.94V549.96h-8.94zM688.75 544.67h1.91V549.96h-1.91zM691.56 544.67h1.91V549.96h-1.91zM338.61 549.86h6.12V555.15h-6.12zM348.45 549.86h1.91V555.15h-1.91zM352.67 549.86h1.91V555.15h-1.91zM358.29 549.86h3.31V555.15h-3.31zM362.51 549.86h1.91V555.15h-1.91zM366.73 549.86h1.91V555.15h-1.91zM373.76 549.86h6.12V555.15h-6.12zM380.79 549.86h4.72V555.15h-4.72zM386.42 549.86h1.91V555.15h-1.91zM390.64 549.86h1.91V555.15h-1.91zM393.45 549.86h1.91V555.15h-1.91zM403.29 549.86h1.91V555.15h-1.91zM410.32 549.86h3.31V555.15h-3.31zM414.54 549.86h1.91V555.15h-1.91zM417.35 549.86h7.53V555.15h-7.53zM430.01 549.86h1.91V555.15h-1.91zM434.23 549.86h1.91V555.15h-1.91zM442.66 549.86h4.72V555.15h-4.72zM449.70 549.86h1.91V555.15h-1.91zM452.51 549.86h4.72V555.15h-4.72zM458.13 549.86h6.12V555.15h-6.12zM466.57 549.86h1.91V555.15h-1.91zM469.38 549.86h1.91V555.15h-1.91zM479.23 549.86h1.91V555.15h-1.91zM482.04 549.86h6.12V555.15h-6.12zM490.48 549.86h3.31V555.15h-3.31zM496.10 549.86h3.31V555.15h-3.31zM500.32 549.86h4.72V555.15h-4.72zM505.94 549.86h3.31V555.15h-3.31zM510.16 549.86h1.91V555.15h-1.91zM514.38 549.86h4.72V555.15h-4.72zM520.01 549.86h1.91V555.15h-1.91zM529.85 549.86h3.31V555.15h-3.31zM535.47 549.86h3.31V555.15h-3.31zM539.69 549.86h6.12V555.15h-6.12zM548.13 549.86h4.72V555.15h-4.72zM553.76 549.86h4.72V555.15h-4.72zM560.79 549.86h1.91V555.15h-1.91zM566.41 549.86h1.91V555.15h-1.91zM572.04 549.86h4.72V555.15h-4.72zM577.66 549.86h4.72V555.15h-4.72zM584.69 549.86h8.94V555.15h-8.94zM594.54 549.86h1.91V555.15h-1.91zM597.35 549.86h1.91V555.15h-1.91zM601.57 549.86h3.31V555.15h-3.31zM605.78 549.86h3.31V555.15h-3.31zM612.82 549.86h4.72V555.15h-4.72zM618.44 549.86h1.91V555.15h-1.91zM625.47 549.86h1.91V555.15h-1.91zM629.69 549.86h1.91V555.15h-1.91zM636.72 549.86h1.91V555.15h-1.91zM639.53 549.86h1.91V555.15h-1.91zM649.38 549.86h4.72V555.15h-4.72zM655.00 549.86h1.91V555.15h-1.91zM657.81 549.86h6.12V555.15h-6.12zM666.25 549.86h3.31V555.15h-3.31zM673.28 549.86h3.31V555.15h-3.31zM677.50 549.86h4.72V555.15h-4.72zM683.13 549.86h4.72V555.15h-4.72zM691.56 549.86h3.31V555.15h-3.31zM338.61 555.05h6.12V560.34h-6.12zM348.45 555.05h1.91V560.34h-1.91zM355.48 555.05h3.31V560.34h-3.31zM359.70 555.05h1.91V560.34h-1.91zM362.51 555.05h8.94V560.34h-8.94zM372.35 555.05h3.31V560.34h-3.31zM376.57 555.05h1.91V560.34h-1.91zM382.20 555.05h3.31V560.34h-3.31zM386.42 555.05h3.31V560.34h-3.31zM390.64 555.05h3.31V560.34h-3.31zM399.07 555.05h3.31V560.34h-3.31zM403.29 555.05h6.12V560.34h-6.12zM410.32 555.05h3.31V560.34h-3.31zM420.17 555.05h1.91V560.34h-1.91zM424.38 555.05h1.91V560.34h-1.91zM428.60 555.05h4.72V560.34h-4.72zM434.23 555.05h1.91V560.34h-1.91zM437.04 555.05h6.12V560.34h-6.12zM445.48 555.05h1.91V560.34h-1.91zM452.51 555.05h4.72V560.34h-4.72zM458.13 555.05h4.72V560.34h-4.72zM466.57 555.05h1.91V560.34h-1.91zM473.60 555.05h3.31V560.34h-3.31zM477.82 555.05h3.31V560.34h-3.31zM482.04 555.05h7.53V560.34h-7.53zM493.29 555.05h3.31V560.34h-3.31zM497.51 555.05h1.91V560.34h-1.91zM501.73 555.05h1.91V560.34h-1.91zM505.94 555.05h3.31V560.34h-3.31zM510.16 555.05h3.31V560.34h-3.31zM520.01 555.05h1.91V560.34h-1.91zM524.22 555.05h4.72V560.34h-4.72zM529.85 555.05h3.31V560.34h-3.31zM535.47 555.05h3.31V560.34h-3.31zM545.32 555.05h1.91V560.34h-1.91zM548.13 555.05h3.31V560.34h-3.31zM553.76 555.05h3.31V560.34h-3.31zM562.19 555.05h6.12V560.34h-6.12zM570.63 555.05h3.31V560.34h-3.31zM574.85 555.05h1.91V560.34h-1.91zM577.66 555.05h1.91V560.34h-1.91zM580.47 555.05h3.31V560.34h-3.31zM587.50 555.05h3.31V560.34h-3.31zM591.72 555.05h8.94V560.34h-8.94zM601.57 555.05h1.91V560.34h-1.91zM605.78 555.05h4.72V560.34h-4.72zM611.41 555.05h3.31V560.34h-3.31zM618.44 555.05h3.31V560.34h-3.31zM625.47 555.05h3.31V560.34h-3.31zM635.32 555.05h1.91V560.34h-1.91zM638.13 555.05h1.91V560.34h-1.91zM640.94 555.05h6.12V560.34h-6.12zM649.38 555.05h1.91V560.34h-1.91zM652.19 555.05h3.31V560.34h-3.31zM657.81 555.05h1.91V560.34h-1.91zM667.66 555.05h4.72V560.34h-4.72zM673.28 555.05h1.91V560.34h-1.91zM677.50 555.05h7.53V560.34h-7.53zM685.94 555.05h3.31V560.34h-3.31zM690.16 555.05h6.12V560.34h-6.12zM338.61 560.24h1.91V565.53h-1.91zM342.82 560.24h1.91V565.53h-1.91zM352.67 560.24h1.91V565.53h-1.91zM356.89 560.24h1.91V565.53h-1.91zM362.51 560.24h1.91V565.53h-1.91zM365.32 560.24h1.91V565.53h-1.91zM372.35 560.24h1.91V565.53h-1.91zM377.98 560.24h7.53V565.53h-7.53zM386.42 560.24h1.91V565.53h-1.91zM392.04 560.24h1.91V565.53h-1.91zM399.07 560.24h3.31V565.53h-3.31zM403.29 560.24h6.12V565.53h-6.12zM410.32 560.24h4.72V565.53h-4.72zM417.35 560.24h1.91V565.53h-1.91zM420.17 560.24h3.31V565.53h-3.31zM424.38 560.24h1.91V565.53h-1.91zM434.23 560.24h1.91V565.53h-1.91zM437.04 560.24h1.91V565.53h-1.91zM444.07 560.24h8.94V565.53h-8.94zM455.32 560.24h1.91V565.53h-1.91zM458.13 560.24h1.91V565.53h-1.91zM460.95 560.24h6.12V565.53h-6.12zM470.79 560.24h1.91V565.53h-1.91zM475.01 560.24h4.72V565.53h-4.72zM482.04 560.24h7.53V565.53h-7.53zM490.48 560.24h3.31V565.53h-3.31zM496.10 560.24h3.31V565.53h-3.31zM500.32 560.24h1.91V565.53h-1.91zM505.94 560.24h1.91V565.53h-1.91zM510.16 560.24h6.12V565.53h-6.12zM517.19 560.24h3.31V565.53h-3.31zM522.82 560.24h1.91V565.53h-1.91zM529.85 560.24h6.12V565.53h-6.12zM538.29 560.24h1.91V565.53h-1.91zM541.10 560.24h6.12V565.53h-6.12zM549.54 560.24h1.91V565.53h-1.91zM553.76 560.24h7.53V565.53h-7.53zM562.19 560.24h1.91V565.53h-1.91zM565.00 560.24h3.31V565.53h-3.31zM570.63 560.24h3.31V565.53h-3.31zM577.66 560.24h3.31V565.53h-3.31zM581.88 560.24h3.31V565.53h-3.31zM586.10 560.24h3.31V565.53h-3.31zM595.94 560.24h1.91V565.53h-1.91zM601.57 560.24h1.91V565.53h-1.91zM608.60 560.24h6.12V565.53h-6.12zM615.63 560.24h4.72V565.53h-4.72zM622.66 560.24h1.91V565.53h-1.91zM625.47 560.24h1.91V565.53h-1.91zM629.69 560.24h1.91V565.53h-1.91zM632.50 560.24h1.91V565.53h-1.91zM642.35 560.24h1.91V565.53h-1.91zM649.38 560.24h3.31V565.53h-3.31zM659.22 560.24h1.91V565.53h-1.91zM664.85 560.24h1.91V565.53h-1.91zM670.47 560.24h1.91V565.53h-1.91zM673.28 560.24h3.31V565.53h-3.31zM677.50 560.24h3.31V565.53h-3.31zM683.13 560.24h1.91V565.53h-1.91zM685.94 560.24h7.53V565.53h-7.53zM338.61 565.43h1.91V570.72h-1.91zM342.82 565.43h1.91V570.72h-1.91zM345.64 565.43h1.91V570.72h-1.91zM351.26 565.43h8.94V570.72h-8.94zM362.51 565.43h1.91V570.72h-1.91zM365.32 565.43h1.91V570.72h-1.91zM368.14 565.43h3.31V570.72h-3.31zM373.76 565.43h7.53V570.72h-7.53zM386.42 565.43h1.91V570.72h-1.91zM389.23 565.43h4.72V570.72h-4.72zM394.85 565.43h4.72V570.72h-4.72zM407.51 565.43h1.91V570.72h-1.91zM410.32 565.43h7.53V570.72h-7.53zM418.76 565.43h1.91V570.72h-1.91zM425.79 565.43h1.91V570.72h-1.91zM430.01 565.43h3.31V570.72h-3.31zM434.23 565.43h1.91V570.72h-1.91zM437.04 565.43h1.91V570.72h-1.91zM442.66 565.43h6.12V570.72h-6.12zM452.51 565.43h4.72V570.72h-4.72zM458.13 565.43h6.12V570.72h-6.12zM466.57 565.43h4.72V570.72h-4.72zM473.60 565.43h3.31V570.72h-3.31zM479.23 565.43h1.91V570.72h-1.91zM482.04 565.43h1.91V570.72h-1.91zM486.26 565.43h7.53V570.72h-7.53zM494.69 565.43h6.12V570.72h-6.12zM503.13 565.43h1.91V570.72h-1.91zM505.94 565.43h3.31V570.72h-3.31zM510.16 565.43h3.31V570.72h-3.31zM521.41 565.43h1.91V570.72h-1.91zM524.22 565.43h4.72V570.72h-4.72zM529.85 565.43h3.31V570.72h-3.31zM534.07 565.43h8.94V570.72h-8.94zM543.91 565.43h1.91V570.72h-1.91zM550.94 565.43h1.91V570.72h-1.91zM553.76 565.43h3.31V570.72h-3.31zM563.60 565.43h1.91V570.72h-1.91zM566.41 565.43h4.72V570.72h-4.72zM573.44 565.43h3.31V570.72h-3.31zM577.66 565.43h1.91V570.72h-1.91zM580.47 565.43h6.12V570.72h-6.12zM590.32 565.43h1.91V570.72h-1.91zM594.54 565.43h1.91V570.72h-1.91zM601.57 565.43h1.91V570.72h-1.91zM608.60 565.43h1.91V570.72h-1.91zM611.41 565.43h1.91V570.72h-1.91zM615.63 565.43h4.72V570.72h-4.72zM625.47 565.43h4.72V570.72h-4.72zM635.32 565.43h3.31V570.72h-3.31zM640.94 565.43h1.91V570.72h-1.91zM646.56 565.43h1.91V570.72h-1.91zM649.38 565.43h1.91V570.72h-1.91zM652.19 565.43h1.91V570.72h-1.91zM657.81 565.43h6.12V570.72h-6.12zM664.85 565.43h3.31V570.72h-3.31zM673.28 565.43h6.12V570.72h-6.12zM680.31 565.43h4.72V570.72h-4.72zM685.94 565.43h1.91V570.72h-1.91zM688.75 565.43h1.91V570.72h-1.91zM338.61 570.62h4.72V575.91h-4.72zM347.04 570.62h1.91V575.91h-1.91zM355.48 570.62h1.91V575.91h-1.91zM358.29 570.62h1.91V575.91h-1.91zM362.51 570.62h6.12V575.91h-6.12zM369.54 570.62h3.31V575.91h-3.31zM375.17 570.62h6.12V575.91h-6.12zM383.60 570.62h1.91V575.91h-1.91zM386.42 570.62h4.72V575.91h-4.72zM393.45 570.62h3.31V575.91h-3.31zM397.67 570.62h1.91V575.91h-1.91zM404.70 570.62h4.72V575.91h-4.72zM410.32 570.62h4.72V575.91h-4.72zM415.95 570.62h1.91V575.91h-1.91zM418.76 570.62h1.91V575.91h-1.91zM427.20 570.62h6.12V575.91h-6.12zM434.23 570.62h3.31V575.91h-3.31zM438.45 570.62h1.91V575.91h-1.91zM444.07 570.62h3.31V575.91h-3.31zM453.91 570.62h1.91V575.91h-1.91zM458.13 570.62h1.91V575.91h-1.91zM460.95 570.62h3.31V575.91h-3.31zM466.57 570.62h1.91V575.91h-1.91zM472.20 570.62h1.91V575.91h-1.91zM482.04 570.62h1.91V575.91h-1.91zM486.26 570.62h1.91V575.91h-1.91zM490.48 570.62h6.12V575.91h-6.12zM500.32 570.62h4.72V575.91h-4.72zM505.94 570.62h4.72V575.91h-4.72zM512.98 570.62h1.91V575.91h-1.91zM515.79 570.62h1.91V575.91h-1.91zM524.22 570.62h1.91V575.91h-1.91zM529.85 570.62h3.31V575.91h-3.31zM535.47 570.62h1.91V575.91h-1.91zM541.10 570.62h1.91V575.91h-1.91zM545.32 570.62h1.91V575.91h-1.91zM553.76 570.62h3.31V575.91h-3.31zM557.97 570.62h3.31V575.91h-3.31zM569.22 570.62h1.91V575.91h-1.91zM574.85 570.62h1.91V575.91h-1.91zM577.66 570.62h3.31V575.91h-3.31zM587.50 570.62h1.91V575.91h-1.91zM590.32 570.62h3.31V575.91h-3.31zM597.35 570.62h3.31V575.91h-3.31zM601.57 570.62h1.91V575.91h-1.91zM604.38 570.62h6.12V575.91h-6.12zM612.82 570.62h1.91V575.91h-1.91zM617.03 570.62h4.72V575.91h-4.72zM625.47 570.62h1.91V575.91h-1.91zM628.28 570.62h1.91V575.91h-1.91zM632.50 570.62h3.31V575.91h-3.31zM640.94 570.62h3.31V575.91h-3.31zM649.38 570.62h3.31V575.91h-3.31zM657.81 570.62h1.91V575.91h-1.91zM662.03 570.62h3.31V575.91h-3.31zM667.66 570.62h4.72V575.91h-4.72zM673.28 570.62h6.12V575.91h-6.12zM680.31 570.62h3.31V575.91h-3.31zM685.94 570.62h3.31V575.91h-3.31zM690.16 570.62h1.91V575.91h-1.91zM338.61 575.81h1.91V581.10h-1.91zM348.45 575.81h3.31V581.10h-3.31zM352.67 575.81h1.91V581.10h-1.91zM355.48 575.81h3.31V581.10h-3.31zM362.51 575.81h1.91V581.10h-1.91zM370.95 575.81h1.91V581.10h-1.91zM379.39 575.81h1.91V581.10h-1.91zM383.60 575.81h1.91V581.10h-1.91zM386.42 575.81h1.91V581.10h-1.91zM389.23 575.81h1.91V581.10h-1.91zM399.07 575.81h4.72V581.10h-4.72zM404.70 575.81h1.91V581.10h-1.91zM410.32 575.81h4.72V581.10h-4.72zM418.76 575.81h3.31V581.10h-3.31zM425.79 575.81h3.31V581.10h-3.31zM430.01 575.81h3.31V581.10h-3.31zM434.23 575.81h3.31V581.10h-3.31zM438.45 575.81h1.91V581.10h-1.91zM448.29 575.81h1.91V581.10h-1.91zM452.51 575.81h4.72V581.10h-4.72zM458.13 575.81h4.72V581.10h-4.72zM463.76 575.81h3.31V581.10h-3.31zM469.38 575.81h4.72V581.10h-4.72zM477.82 575.81h3.31V581.10h-3.31zM482.04 575.81h3.31V581.10h-3.31zM489.07 575.81h1.91V581.10h-1.91zM493.29 575.81h6.12V581.10h-6.12zM501.73 575.81h1.91V581.10h-1.91zM505.94 575.81h1.91V581.10h-1.91zM510.16 575.81h4.72V581.10h-4.72zM517.19 575.81h6.12V581.10h-6.12zM525.63 575.81h1.91V581.10h-1.91zM529.85 575.81h1.91V581.10h-1.91zM534.07 575.81h4.72V581.10h-4.72zM539.69 575.81h3.31V581.10h-3.31zM543.91 575.81h1.91V581.10h-1.91zM553.76 575.81h1.91V581.10h-1.91zM556.57 575.81h3.31V581.10h-3.31zM566.41 575.81h3.31V581.10h-3.31zM570.63 575.81h6.12V581.10h-6.12zM577.66 575.81h1.91V581.10h-1.91zM580.47 575.81h6.12V581.10h-6.12zM587.50 575.81h1.91V581.10h-1.91zM597.35 575.81h3.31V581.10h-3.31zM601.57 575.81h1.91V581.10h-1.91zM607.19 575.81h3.31V581.10h-3.31zM612.82 575.81h4.72V581.10h-4.72zM619.85 575.81h3.31V581.10h-3.31zM625.47 575.81h1.91V581.10h-1.91zM629.69 575.81h1.91V581.10h-1.91zM635.32 575.81h1.91V581.10h-1.91zM640.94 575.81h7.53V581.10h-7.53zM649.38 575.81h1.91V581.10h-1.91zM652.19 575.81h4.72V581.10h-4.72zM662.03 575.81h3.31V581.10h-3.31zM670.47 575.81h1.91V581.10h-1.91zM673.28 575.81h3.31V581.10h-3.31zM678.91 575.81h3.31V581.10h-3.31zM685.94 575.81h4.72V581.10h-4.72zM692.97 575.81h1.91V581.10h-1.91z" fill="#000"/>
      </g>
      <!-- floating buttons -->
      <g>
        <circle cx="1103" cy="719" r="27" fill="#000" opacity=".35" filter="url(#fabsh)"/>
        <circle cx="1103" cy="809" r="27" fill="#000" opacity=".35" filter="url(#fabsh)"/>
        <circle cx="1103" cy="878" r="27" fill="#000" opacity=".35" filter="url(#fabsh)"/>
        <circle cx="1103" cy="716.9" r="27.1" fill="#f2f2f2"/>
        <circle cx="1103" cy="807" r="27.1" fill="#f2f2f2"/>
        <circle cx="1103" cy="876" r="27.1" fill="#f2f2f2"/>
        <g fill="#5f6163">
          <path transform="translate(1087.5,701.4) scale(1.292)" d="M5 16h3v3h2v-5H5v2zm3-8H5v2h5V5H8v3zm6 11h2v-3h3v-2h-5v5zm2-11V5h-2v5h5V8h-3z"/>
          <path transform="translate(1087.5,791.5) scale(1.292)" d="M19 13h-6v6h-2v-6H5v-2h6V5h2v6h6v2z"/>
          <path transform="translate(1087.5,860.5) scale(1.292)" d="M19 13H5v-2h14v2z"/>
        </g>
      </g>
    </svg>
    <div class="abs pdfshadow"></div>
  </div>

  <div class="abs scroll">
    <div class="abs thumb"></div>
    <svg class="abs" style="left:0;top:0" width="28" height="894" viewBox="0 0 28 894"><path d="M6.8 16.2 12.5 9.900 18.200 16.200z" fill="#a3a3a3"/><path d="M6.800 878 12.5 884.5 18.200 878z" fill="#505050"/></svg>
  </div>

  <div class="abs options">
    <div class="abs sh-top"></div>
    <div class="abs sh-left"></div>
    <div class="abs btn" style="left:23px;top:245px;width:300px;height:59px" role="button"></div>
    <div class="abs select" style="left:23px;top:416px;width:480px;height:51px" role="combobox">
      <svg class="abs" style="left:447px;top:20px" width="14" height="10" viewBox="0 0 14 10"><path d="M0.600 .8H12.400L6.500 9.200z" fill="#7b7b7b"/></svg>
    </div>
    <div class="abs notice" style="left:23px;top:482px;width:555px;height:102px"></div>
    <div class="abs checkbox" style="left:23px;top:857px;width:21px;height:21px" role="checkbox"></div>
  </div>

  <div class="abs modal-footer">
    <div class="abs btn" style="left:38px;top:19px;width:130px;height:38px" role="button"></div>
    <div class="abs btn" style="left:1349px;top:16px;width:89px;height:44px" role="button"></div>
    <div class="abs btn-primary" style="left:1453px;top:16px;width:325px;height:44px" role="button"></div>
  </div>
</div>

<div class="abs texts">
<span class="t" style="left:28.5px;top:24.2px;font-size:26px;line-height:34px;font-weight:400;color:#333333;letter-spacing:0.143px;">Print Preview: 1 Label</span>
<span class="t" style="left:44.1px;top:103.4px;font-size:21.3px;line-height:28px;font-weight:700;color:#f4f4f4;letter-spacing:0.074px;will-change:transform;">475429425</span>
<span class="t" style="left:564.7px;top:102.7px;font-size:20.5px;line-height:27px;font-weight:400;color:#ffffff;letter-spacing:0.000px;will-change:transform;">1</span>
<span class="t" style="left:595.2px;top:102.7px;font-size:20.5px;line-height:27px;font-weight:400;color:#ffffff;letter-spacing:0.000px;will-change:transform;">/</span>
<span class="t" style="left:614.7px;top:102.7px;font-size:20.5px;line-height:27px;font-weight:400;color:#ffffff;letter-spacing:0.000px;will-change:transform;">2</span>
<span class="t" style="left:1227.8px;top:99.0px;font-size:24px;line-height:31px;font-weight:400;color:#3c4146;letter-spacing:0.080px;">Print Options</span>
<span class="t" style="left:1227.8px;top:171.4px;font-size:19.5px;line-height:25px;font-weight:700;color:#3c4146;letter-spacing:0.019px;">Browser Print</span>
<span class="t" style="left:1227.8px;top:211.6px;font-size:20.8px;line-height:27px;font-weight:400;color:#3f4449;letter-spacing:0.062px;">Hover the cursor over the preview window to access</span>
<span class="t" style="left:1227.8px;top:244.7px;font-size:20.8px;line-height:27px;font-weight:400;color:#3f4449;letter-spacing:0.131px;">browser printing, or download the document using the</span>
<span class="t" style="left:1227.8px;top:277.8px;font-size:20.8px;line-height:27px;font-weight:400;color:#3f4449;letter-spacing:-0.157px;"><b style="letter-spacing:-.45px">Download</b> button.</span>
<span class="t" style="left:1337.5px;top:341.7px;font-size:18.2px;line-height:24px;font-weight:400;color:#2a2a2a;letter-spacing:-0.184px;">Download</span>
<span class="t" style="left:1227.5px;top:456.8px;font-size:19.5px;line-height:25px;font-weight:700;color:#3c4146;letter-spacing:0.071px;">Print through ShipStation Connect</span>
<span class="t" style="left:1240.7px;top:504.7px;font-size:23.4px;line-height:30px;font-weight:400;color:#3f4449;letter-spacing:0.093px;">Select Printer...</span>
<span class="t" style="left:1288.0px;top:575.7px;font-size:19.5px;line-height:25px;font-weight:400;color:#3f4449;letter-spacing:0.050px;">Install ShipStation Connect to print directly to your</span>
<span class="t" style="left:1418.3px;top:599.7px;font-size:19.5px;line-height:25px;font-weight:400;color:#3f4449;letter-spacing:0.099px;">computer's printers.</span>
<span class="t" style="left:1399.1px;top:623.1px;font-size:19.5px;line-height:25px;font-weight:400;color:#3b7bbf;letter-spacing:-0.143px;">Get ShipStation Connect</span>
<span class="t" style="left:1260.5px;top:930.7px;font-size:23.4px;line-height:30px;font-weight:400;color:#3f4449;letter-spacing:0.191px;">Save as <b style="letter-spacing:-.8px">Label</b> print default</span>
<span class="t" style="left:57.2px;top:1006.6px;font-size:19.5px;line-height:25px;font-weight:400;color:#2a2a2a;letter-spacing:0.016px;">Void Labels</span>
<span class="t" style="left:1368.7px;top:1006.5px;font-size:19.5px;line-height:25px;font-weight:400;color:#2a2a2a;letter-spacing:-0.361px;">Cancel</span>
<span class="t" style="left:1473.0px;top:1006.3px;font-size:19.5px;line-height:25px;font-weight:400;color:#ffffff;letter-spacing:0.017px;text-shadow:0 0 1px rgba(255,255,255,.6);">Print through ShipStation Connect</span>
</div>

<!-- screenshot rounded corners -->
<svg class="abs" style="left:0;top:0" width="1812" height="1059" viewBox="0 0 1812 1059">
  <path fill="#fff" d="M0 0H8A8 8 0 0 0 0 8zM1812 0V8A8 8 0 0 0 1804 0zM0 1059V1051A8 8 0 0 0 8 1059zM1812 1059H1804A8 8 0 0 0 1812 1051z"/>
</svg>
</body>
</html>
